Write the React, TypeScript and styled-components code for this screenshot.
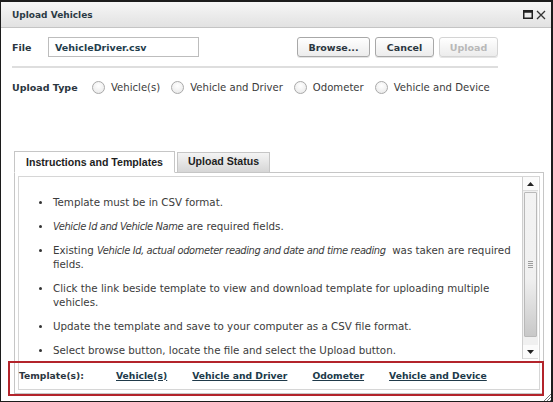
import React from "react";
import styled, { createGlobalStyle } from "styled-components";

const Global = createGlobalStyle`
  html, body { margin: 0; padding: 0; background: #fff; }
  * { box-sizing: border-box; }
  body { font-family: "DejaVu Sans", Verdana, sans-serif; }
`;

const Dialog = styled.div`
  position: relative;
  width: 553px;
  height: 402px;
  border: 1px solid #1c1c1c;
  border-top-width: 2px;
  border-right-width: 2px;
  display: flex;
  flex-direction: column;
  background: #fff;
  overflow: hidden;
`;

const TitleBar = styled.div`
  height: 26px;
  flex: none;
  display: flex;
  align-items: center;
  justify-content: space-between;
  padding: 0 5px 0 11px;
  background: linear-gradient(#f6f6f6, #e2e2e2);
  border-bottom: 1px solid #c4c4c4;
`;

const Title = styled.span`
  font-size: 9px;
  font-weight: bold;
  color: #2b3a44;
`;

const TitleIcons = styled.div`
  display: flex;
  align-items: center;
  gap: 3px;
`;

const Body = styled.div`
  flex: 1;
  display: flex;
  flex-direction: column;
  padding: 9px 10px 0 11px;
  min-height: 0;
`;

const FileRow = styled.div`
  display: flex;
  align-items: center;
  height: 20px;
  width: 486px;
`;

const Label = styled.span<{ $w: number }>`
  width: ${(p) => p.$w}px;
  flex: none;
  font-size: 9.5px;
  font-weight: bold;
  color: #2b3640;
`;

const FileInput = styled.div`
  width: 151px;
  height: 20px;
  border: 1px solid #bdbdbd;
  padding: 0 6px;
  display: flex;
  align-items: center;
  font-size: 9.5px;
  font-weight: bold;
  color: #1f3d4c;
`;

const Buttons = styled.div`
  margin-left: auto;
  display: flex;
  gap: 5px;
`;

const Button = styled.div<{ $w: number; $disabled?: boolean }>`
  width: ${(p) => p.$w}px;
  height: 20px;
  border: 1px solid ${(p) => (p.$disabled ? "#d4d4d4" : "#a8a8a8")};
  border-radius: 3px;
  background: linear-gradient(#ffffff, #ececec);
  display: flex;
  align-items: center;
  justify-content: center;
  font-size: 9.5px;
  font-weight: bold;
  color: ${(p) => (p.$disabled ? "#b8b8b8" : "#2b3640")};
  box-shadow: 0 1px 0 #e4e4e4;
`;

const Separator = styled.div`
  width: 486px;
  height: 2px;
  margin-top: 9px;
  background: #dedede;
`;

const TypeRow = styled.div`
  display: flex;
  align-items: center;
  margin-top: 11px;
  height: 16px;
`;

const RadioGroup = styled.div`
  display: flex;
  align-items: center;
  gap: 11px;
  margin-left: 0;
`;

const RadioItem = styled.label`
  display: flex;
  align-items: center;
  gap: 6px;
  font-size: 10.1px;
  color: #3a3a3a;
`;

const RadioCircle = styled.span`
  width: 13px;
  height: 13px;
  border-radius: 50%;
  border: 1px solid #a9a9a9;
  background: radial-gradient(circle at 50% 35%, #ffffff, #e6e6e6);
  flex: none;
`;

const Tabs = styled.div`
  display: flex;
  align-items: flex-end;
  gap: 2px;
  margin-top: 56px;
  margin-left: 2px;
  position: relative;
  z-index: 1;
`;

const Tab = styled.div<{ $active?: boolean; $w: number }>`
  width: ${(p) => p.$w}px;
  height: ${(p) => (p.$active ? 22 : 21)}px;
  border: 1px solid #c6c6c6;
  border-bottom: ${(p) => (p.$active ? "1px solid #fff" : "1px solid #c6c6c6")};
  background: ${(p) => (p.$active ? "#fff" : "linear-gradient(#f4f4f4, #d6d6d6)")};
  display: flex;
  align-items: center;
  justify-content: center;
  font-family: "Liberation Sans", Arial, sans-serif;
  font-size: 10.6px;
  font-weight: bold;
  color: #1e1e1e;
  padding-bottom: ${(p) => (p.$active ? 0 : 3)}px;
`;

const Panel = styled.div`
  margin-left: 2px;
  margin-top: -1px;
  width: 530px;
  height: 222px;
  border: 1px solid #c6c6c6;
  padding: 3px;
  display: flex;
`;

const Inner = styled.div`
  flex: 1;
  border: 1px solid #d6d6d6;
  display: flex;
  flex-direction: column;
  min-height: 0;
`;

const ScrollArea = styled.div`
  display: flex;
  height: 182px;
  flex: none;
  overflow: hidden;
`;

const List = styled.ul`
  flex: 1;
  margin: 0;
  padding: 18px 2px 0 34px;
  list-style: none;
  overflow: hidden;
`;

const Item = styled.li`
  position: relative;
  font-size: 10.3px;
  line-height: 14px;
  color: #3b3b3b;
  margin-bottom: 10px;
  &::before {
    content: "";
    position: absolute;
    left: -14px;
    top: 6px;
    width: 3px;
    height: 3px;
    border-radius: 50%;
    background: #333;
  }
  em {
    font-style: italic;
    font-size: 9.9px;
    line-height: 1;
    letter-spacing: -0.38px;
  }
`;

const Scrollbar = styled.div`
  width: 16px;
  flex: none;
  margin: 0 1px 0 0;
  border-left: 1px solid #cfcfcf;
  background: #f0f0f0;
  display: flex;
  flex-direction: column;
`;

const ScrollBtn = styled.div`
  height: 14px;
  flex: none;
  display: flex;
  align-items: center;
  justify-content: center;
  background: #fbfbfb;
  border-bottom: 1px solid #dcdcdc;
`;

const Thumb = styled.div`
  flex: 1;
  margin: 1px 1px 8px 1px;
  border: 1px solid #b9b9b9;
  border-radius: 1px;
  background: linear-gradient(#f3f3f3, #f0f0f0 60%, #c8c8c8);
  display: flex;
  align-items: center;
  justify-content: center;
`;

const Grip = styled.div`
  width: 5px;
  height: 7px;
  background: repeating-linear-gradient(#9d9d9d 0 1px, transparent 1px 2px);
`;

const Footer = styled.div`
  flex: 1;
  display: flex;
  align-items: center;
  padding-left: 0;
  padding-top: 2px;
`;

const FooterLabel = styled.span`
  width: 97px;
  font-size: 9.2px;
  font-weight: bold;
  color: #2b3640;
`;

const Links = styled.div`
  display: flex;
  gap: 25px;
`;

const TLink = styled.a`
  font-size: 9.2px;
  font-weight: bold;
  color: #203a4a;
  text-decoration: underline;
  cursor: pointer;
`;

const Annotation = styled.div`
  position: absolute;
  left: 7px;
  top: 359px;
  width: 536px;
  height: 35px;
  border: 2px solid #b3242b;
  pointer-events: none;
`;

const ResizeGrip = styled.svg`
  position: absolute;
  right: 0;
  bottom: 0;
`;

export default function App() {
  const types = ["Vehicle(s)", "Vehicle and Driver", "Odometer", "Vehicle and Device"];
  return (
    <>
      <Global />
      <Dialog>
        <TitleBar>
          <Title>Upload Vehicles</Title>
          <TitleIcons>
            <svg width="10" height="9" viewBox="0 0 10 9">
              <rect x="0.75" y="0.75" width="8.5" height="7.5" fill="none" stroke="#222" strokeWidth="1.5" />
              <rect x="0.75" y="0.75" width="8.5" height="2" fill="#222" />
            </svg>
            <svg width="10" height="10" viewBox="0 0 10 10">
              <path d="M1 1 L9 9 M9 1 L1 9" stroke="#333" strokeWidth="1.3" />
            </svg>
          </TitleIcons>
        </TitleBar>
        <Body>
          <FileRow>
            <Label $w={36}>File</Label>
            <FileInput>VehicleDriver.csv</FileInput>
            <Buttons>
              <Button $w={73}>Browse...</Button>
              <Button $w={59}>Cancel</Button>
              <Button $w={59} $disabled>Upload</Button>
            </Buttons>
          </FileRow>
          <Separator />
          <TypeRow>
            <Label $w={80}>Upload Type</Label>
            <RadioGroup>
              {types.map((t) => (
                <RadioItem key={t}>
                  <RadioCircle />
                  {t}
                </RadioItem>
              ))}
            </RadioGroup>
          </TypeRow>
          <Tabs>
            <Tab $active $w={161}>Instructions and Templates</Tab>
            <Tab $w={93}>Upload Status</Tab>
          </Tabs>
          <Panel>
            <Inner>
              <ScrollArea>
                <List>
                  <Item>Template must be in CSV format.</Item>
                  <Item>
                    <em>Vehicle Id and Vehicle Name</em> are required fields.
                  </Item>
                  <Item>
                    Existing <em>Vehicle Id, actual odometer reading and date and time reading</em>&nbsp; was taken are required fields.
                  </Item>
                  <Item>Click the link beside template to view and download template for uploading multiple vehicles.</Item>
                  <Item>Update the template and save to your computer as a CSV file format.</Item>
                  <Item>Select browse button, locate the file and select the Upload button.</Item>
                </List>
                <Scrollbar>
                  <ScrollBtn>
                    <svg width="7" height="4" viewBox="0 0 7 4">
                      <path d="M0 4 L3.5 0 L7 4 Z" fill="#222" />
                    </svg>
                  </ScrollBtn>
                  <Thumb>
                    <Grip />
                  </Thumb>
                  <ScrollBtn>
                    <svg width="7" height="4" viewBox="0 0 7 4">
                      <path d="M0 0 L3.5 4 L7 0 Z" fill="#222" />
                    </svg>
                  </ScrollBtn>
                </Scrollbar>
              </ScrollArea>
              <Footer>
                <FooterLabel>Template(s):</FooterLabel>
                <Links>
                  <TLink>Vehicle(s)</TLink>
                  <TLink>Vehicle and Driver</TLink>
                  <TLink>Odometer</TLink>
                  <TLink>Vehicle and Device</TLink>
                </Links>
              </Footer>
            </Inner>
          </Panel>
        </Body>
        <Annotation />
        <ResizeGrip width="8" height="8" viewBox="0 0 8 8">
          <path d="M8 1 L1 8 M8 4 L4 8 M8 7 L7 8" stroke="#777" strokeWidth="1" />
        </ResizeGrip>
      </Dialog>
    </>
  );
}
